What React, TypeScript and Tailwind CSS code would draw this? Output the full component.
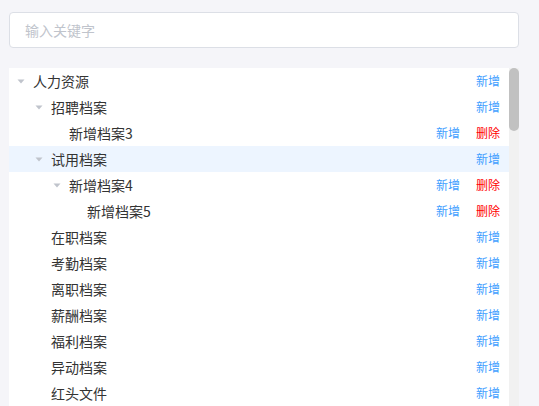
type TreeRow = {
  label: string;
  level: 0 | 1 | 2 | 3;
  expanded?: boolean;
  canDelete?: boolean;
  current?: boolean;
};

//* data *//
const rows: TreeRow[] = [
  { label: "人力资源", level: 0, expanded: true },
  { label: "招聘档案", level: 1, expanded: true },
  { label: "新增档案3", level: 2, canDelete: true },
  { label: "试用档案", level: 1, expanded: true, current: true },
  { label: "新增档案4", level: 2, expanded: true, canDelete: true },
  { label: "新增档案5", level: 3, canDelete: true },
  { label: "在职档案", level: 1 },
  { label: "考勤档案", level: 1 },
  { label: "离职档案", level: 1 },
  { label: "薪酬档案", level: 1 },
  { label: "福利档案", level: 1 },
  { label: "异动档案", level: 1 },
  { label: "红头文件", level: 1 },
];

const indent: Record<TreeRow["level"], string> = {
  0: "pl-0",
  1: "pl-[18px]",
  2: "pl-[36px]",
  3: "pl-[54px]",
};

const Caret = ({ show }: { show: boolean }) => (
  <span className="flex h-[26px] w-6 shrink-0 items-center justify-center">
    {show && (
      <svg width="8" height="5" viewBox="0 0 8 5" className="mt-[1px]">
        <path d="M0.5 0.5 L7.5 0.5 L4 4.5 Z" fill="#c0c4cc" />
      </svg>
    )}
  </span>
);

const Row = ({ row }: { row: TreeRow }) => (
  <div
    className={`flex h-[26px] items-center pr-[9px] ${indent[row.level]} ${
      row.current ? "bg-[#edf5ff]" : ""
    }`}
  >
    <Caret show={!!row.expanded} />
    <span className="text-[14px] text-[#333333]">{row.label}</span>
    <div className="flex-1" />
    <div className="flex items-center gap-4 text-[12px]">
      <button className="text-[#409eff]">新增</button>
      {row.canDelete && <button className="text-[#ff0000]">删除</button>}
    </div>
  </div>
);

export default function App() {
  return (
    <div
      className="flex h-screen w-full flex-col bg-[#f5f5f9] pl-[9px] pt-3"
      style={{ fontFamily: '"Noto Sans CJK SC", "Noto Sans", sans-serif' }}
    >
      <div className="w-[510px]">
        <input
          placeholder="输入关键字"
          className="h-9 w-full rounded border border-[#dcdfe6] bg-white px-[15px] text-[14px] text-[#606266] outline-none placeholder:text-[#c0c4cc]"
        />
      </div>
      <div className="mt-5 flex min-h-0 w-[510px] flex-1 overflow-hidden">
        <div className="flex-1 bg-white">
          {rows.map((row) => (
            <Row key={row.label} row={row} />
          ))}
        </div>
        <div className="w-[10px] bg-[#f1f1f1]">
          <div className="h-[63px] rounded-full bg-[#c1c1c1]" />
        </div>
      </div>
    </div>
  );
}
